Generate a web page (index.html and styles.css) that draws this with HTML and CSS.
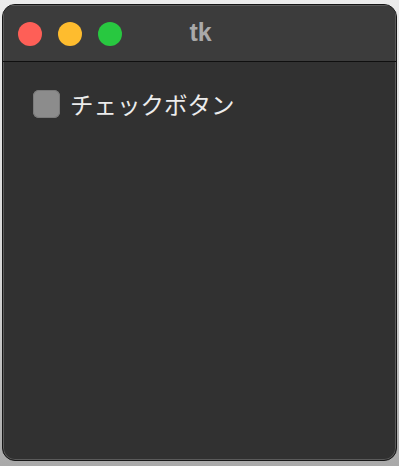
FILE: index.html
```html
<!DOCTYPE html>
<html lang="ja">
<head>
<meta charset="utf-8">
<link rel="stylesheet" href="styles.css">
</head>
<body>
<div class="window">
  <div class="titlebar">
    <div class="lights">
      <span class="light red"></span>
      <span class="light yellow"></span>
      <span class="light green"></span>
    </div>
    <div class="title">tk</div>
  </div>
  <div class="content">
    <label class="check">
      <span class="box"></span>
      <span class="label">チェックボタン</span>
    </label>
  </div>
</div>
</body>
</html>
```

FILE: styles.css
```css
html, body {
  margin: 0;
  height: 100%;
}
body {
  background: linear-gradient(#ececec, #d6d6d6 60%, #a9a9a9);
  padding: 4px 2px 5px 2px;
  box-sizing: border-box;
  font-family: "Noto Sans CJK JP", "Noto Sans", sans-serif;
}
.window {
  height: 457px;
  border-radius: 13px;
  background: #313131;
  border: 1px solid #161616;
  box-shadow: inset 0 0 0 1px #5a5a5a;
  overflow: hidden;
  display: flex;
  flex-direction: column;
  box-sizing: border-box;
}
.titlebar {
  height: 56px;
  flex: none;
  background: #3c3c3c;
  border-bottom: 1px solid #0f0f0f;
  position: relative;
  display: flex;
  align-items: center;
  box-shadow: inset 0 1px 0 #5a5a5a, inset 1px 0 0 #5a5a5a, inset -1px 0 0 #5a5a5a;
}
.lights {
  display: flex;
  gap: 16px;
  padding-left: 15px;
  padding-top: 1px;
}
.light {
  width: 24px;
  height: 24px;
  border-radius: 50%;
  display: block;
}
.red { background: #fe5f57; }
.yellow { background: #febc2e; }
.green { background: #28c840; }
.title {
  position: absolute;
  left: 0;
  right: 0;
  top: 0;
  bottom: 0;
  display: flex;
  align-items: center;
  justify-content: center;
  font-family: "Liberation Sans", "Noto Sans", sans-serif;
  font-weight: bold;
  font-size: 25px;
  color: #a9a9a9;
  padding-left: 2px;
  padding-bottom: 1px;
}
.content {
  flex: 1;
  padding: 28px 0 0 30px;
}
.check {
  display: flex;
  align-items: center;
  gap: 10px;
}
.box {
  width: 27px;
  height: 28px;
  border-radius: 6px;
  background: #8c8c8c;
  box-shadow: inset 0 0 0 1px #7a7a7a;
  display: block;
}
.label {
  font-size: 23.5px;
  color: #ececec;
  line-height: 28px;
}
```
